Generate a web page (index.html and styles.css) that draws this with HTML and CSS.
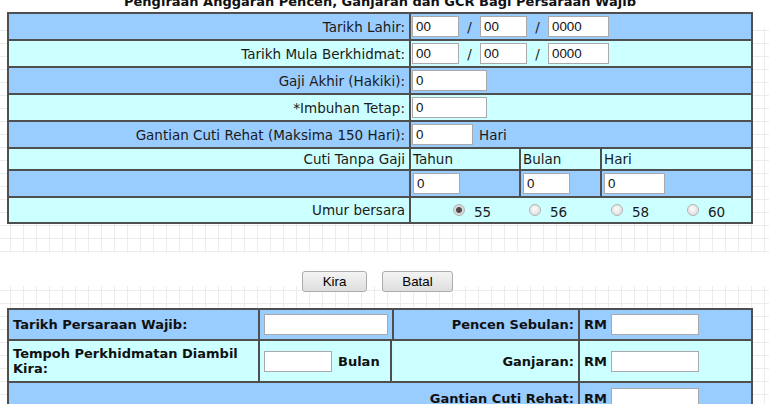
FILE: index.html
```html
<!DOCTYPE html>
<html lang="ms">

<head>
    <meta charset="UTF-8">
    <meta name="viewport" content="width=device-width, initial-scale=1.0">
    <title>Pengiraan Anggaran Pencen</title>
    <link rel="stylesheet" href="styles.css">
</head>

<body>
    <div class="page">

        <h1 class="title">Pengiraan Anggaran Pencen, Ganjaran dan GCR Bagi Persaraan Wajib</h1>

        <div class="form-table">
            <div class="row blue">
                <div class="label">Tarikh Lahir:</div>
                <div class="field">
                    <input class="box dd" type="text" value="00"><span class="slash">/</span><input class="box dd" type="text" value="00"><span class="slash">/</span><input class="box yyyy" type="text" value="0000">
                </div>
            </div>

            <div class="row cyan">
                <div class="label">Tarikh Mula Berkhidmat:</div>
                <div class="field">
                    <input class="box dd" type="text" value="00"><span class="slash">/</span><input class="box dd" type="text" value="00"><span class="slash">/</span><input class="box yyyy" type="text" value="0000">
                </div>
            </div>

            <div class="row blue">
                <div class="label">Gaji Akhir (Hakiki):</div>
                <div class="field"><input class="box money" type="text" value="0"></div>
            </div>

            <div class="row cyan">
                <div class="label">*Imbuhan Tetap:</div>
                <div class="field"><input class="box money" type="text" value="0"></div>
            </div>

            <div class="row blue">
                <div class="label">Gantian Cuti Rehat (Maksima 150 Hari):</div>
                <div class="field"><input class="box days" type="text" value="0"><span class="unit">Hari</span></div>
            </div>

            <div class="row cyan short">
                <div class="label">Cuti Tanpa Gaji</div>
                <div class="field split">
                    <div class="sub">Tahun</div>
                    <div class="sub">Bulan</div>
                    <div class="sub">Hari</div>
                </div>
            </div>

            <div class="row blue">
                <div class="label"></div>
                <div class="field split">
                    <div class="sub"><input class="box dd" type="text" value="0"></div>
                    <div class="sub"><input class="box dd" type="text" value="0"></div>
                    <div class="sub"><input class="box yyyy" type="text" value="0"></div>
                </div>
            </div>

            <div class="row cyan ages-row">
                <div class="label">Umur bersara</div>
                <div class="field ages">
                    <label class="age"><input type="radio" name="umur" checked><span>55</span></label>
                    <label class="age"><input type="radio" name="umur"><span>56</span></label>
                    <label class="age"><input type="radio" name="umur"><span>58</span></label>
                    <label class="age"><input type="radio" name="umur"><span>60</span></label>
                </div>
            </div>
        </div>

        <div class="actions">
            <button class="btn kira">Kira</button>
            <button class="btn batal">Batal</button>
        </div>

        <div class="result-table">
            <div class="rrow blue row-a">
                <div class="rcell">Tarikh Persaraan Wajib:</div>
                <div class="rcell"><input class="box date-out" type="text"></div>
                <div class="rcell right">Pencen Sebulan:</div>
                <div class="rcell"><span class="rm">RM</span><input class="box rm-out" type="text"></div>
            </div>

            <div class="rrow cyan row-b">
                <div class="rcell">Tempoh Perkhidmatan Diambil Kira:</div>
                <div class="rcell"><input class="box month-out" type="text"><span class="rm-unit">Bulan</span></div>
                <div class="rcell right">Ganjaran:</div>
                <div class="rcell"><span class="rm">RM</span><input class="box rm-out" type="text"></div>
            </div>

            <div class="rrow blue row-c">
                <div class="rcell right">Gantian Cuti Rehat:</div>
                <div class="rcell"><span class="rm">RM</span><input class="box rm-out" type="text"></div>
            </div>
        </div>

    </div>
</body>

</html>
```

FILE: styles.css
```css
html {
    margin: 0;
}

body {
    margin: 0;
    font-family: "DejaVu Sans", Verdana, sans-serif;
    font-size: 13px;
    color: #1a1a1a;
    /* faint grid paper, with two plain white bands */
    background:
        linear-gradient(#fff, #fff) 0 0 / 100% 28px no-repeat,
        linear-gradient(#fff, #fff) 0 253px / 100% 33px no-repeat,
        linear-gradient(90deg, #ececec 1px, transparent 1px) 10px 0 / 13px 13px,
        linear-gradient(#ececec 1px, transparent 1px) 0 4px / 13px 13px,
        #fff;
}

.page {
    width: 760px;
}

.title {
    margin: -6px 0 3px;
    font-size: 13px;
    line-height: 15px;
    font-weight: bold;
    text-align: center;
    color: #111;
}

.blue {
    background: #99ccff;
}

.cyan {
    background: #ccffff;
}

/* ---- input form ---- */

.form-table {
    width: 746px;
    margin-left: 7px;
    border: 2px solid #4f4f4f;
    box-sizing: border-box;
    font-size: 13.5px;
}

.row {
    display: grid;
    grid-template-columns: 402px 1fr;
    height: 27px;
    border-bottom: 2px solid #4f4f4f;
    box-sizing: border-box;
}

.row:last-child {
    border-bottom: none;
    height: 24px;
}

.row.short {
    height: 22px;
}

.label {
    display: flex;
    align-items: center;
    justify-content: flex-end;
    padding-right: 4px;
    border-right: 2px solid #4f4f4f;
}

.field {
    display: flex;
    align-items: center;
    padding-left: 1px;
}

.box {
    height: 21px;
    margin: 0;
    box-sizing: border-box;
    border: 1px solid #a9a9a9;
    padding: 1px 3px;
    font-family: "Liberation Sans", Arial, sans-serif;
    font-size: 13.33px;
    font-weight: normal;
    color: #111;
    background: #fff;
}

.dd {
    width: 47px;
}

.yyyy {
    width: 61px;
}

.money {
    width: 75px;
}

.days {
    width: 61px;
}

.slash {
    width: 21px;
    text-align: center;
}

.unit {
    margin-left: 6px;
}

.split {
    display: grid;
    grid-template-columns: 110px 81px 1fr;
    align-items: stretch;
    padding-left: 0;
}

.sub {
    display: flex;
    align-items: center;
    padding-left: 2px;
    border-right: 2px solid #4f4f4f;
}

.sub:last-child {
    border-right: none;
}

.ages {
    display: grid;
    grid-template-columns: 76px 82px 76px 1fr;
    padding-left: 42px;
}

.age {
    display: flex;
    align-items: center;
}

.age input {
    appearance: none;
    -webkit-appearance: none;
    width: 12px;
    height: 12px;
    margin: 0 9px 0 0;
    border: 1px solid #b3b3b3;
    border-radius: 50%;
    background: radial-gradient(circle at 45% 40%, #fbfbfb, #d6d6d6);
}

.age input:checked {
    background: radial-gradient(circle, #4d4d4d 0 2.5px, #dcdcdc 3.5px, #cfcfcf);
}

.age span {
    padding-top: 4px;
}

/* ---- buttons ---- */

.actions {
    display: flex;
    padding-left: 302px;
    margin-top: 47px;
}

.btn {
    height: 21px;
    margin: 0 15px 0 0;
    padding: 0;
    border: 1px solid #acacac;
    border-radius: 3px;
    background: linear-gradient(#f4f4f4, #dedede);
    font-family: "Liberation Sans", Arial, sans-serif;
    font-size: 13.33px;
    color: #000;
}

.kira {
    width: 65px;
}

.batal {
    width: 71px;
}

/* ---- results ---- */

.result-table {
    width: 746px;
    margin: 16px 0 0 7px;
    border: 2px solid #4f4f4f;
    box-sizing: border-box;
    font-weight: bold;
    color: #111;
}

.rrow {
    display: grid;
    box-sizing: border-box;
    border-bottom: 2px solid #4f4f4f;
}

.row-a {
    grid-template-columns: 251px 134px 186px 1fr;
    height: 31px;
}

.row-b {
    grid-template-columns: 251px 132px 188px 1fr;
    height: 42px;
}

.row-c {
    grid-template-columns: 571px 1fr;
    height: 30px;
    border-bottom: none;
}

.rcell {
    display: flex;
    align-items: center;
    padding: 0 4px;
    border-right: 2px solid #4f4f4f;
    box-sizing: border-box;
}

.rcell:last-child {
    border-right: none;
}

.rcell.right {
    justify-content: flex-end;
}

.rm {
    margin-right: 4px;
}

.date-out {
    width: 124px;
}

.month-out {
    width: 68px;
}

.rm-unit {
    margin-left: 6px;
}

.rm-out {
    width: 88px;
}
```
